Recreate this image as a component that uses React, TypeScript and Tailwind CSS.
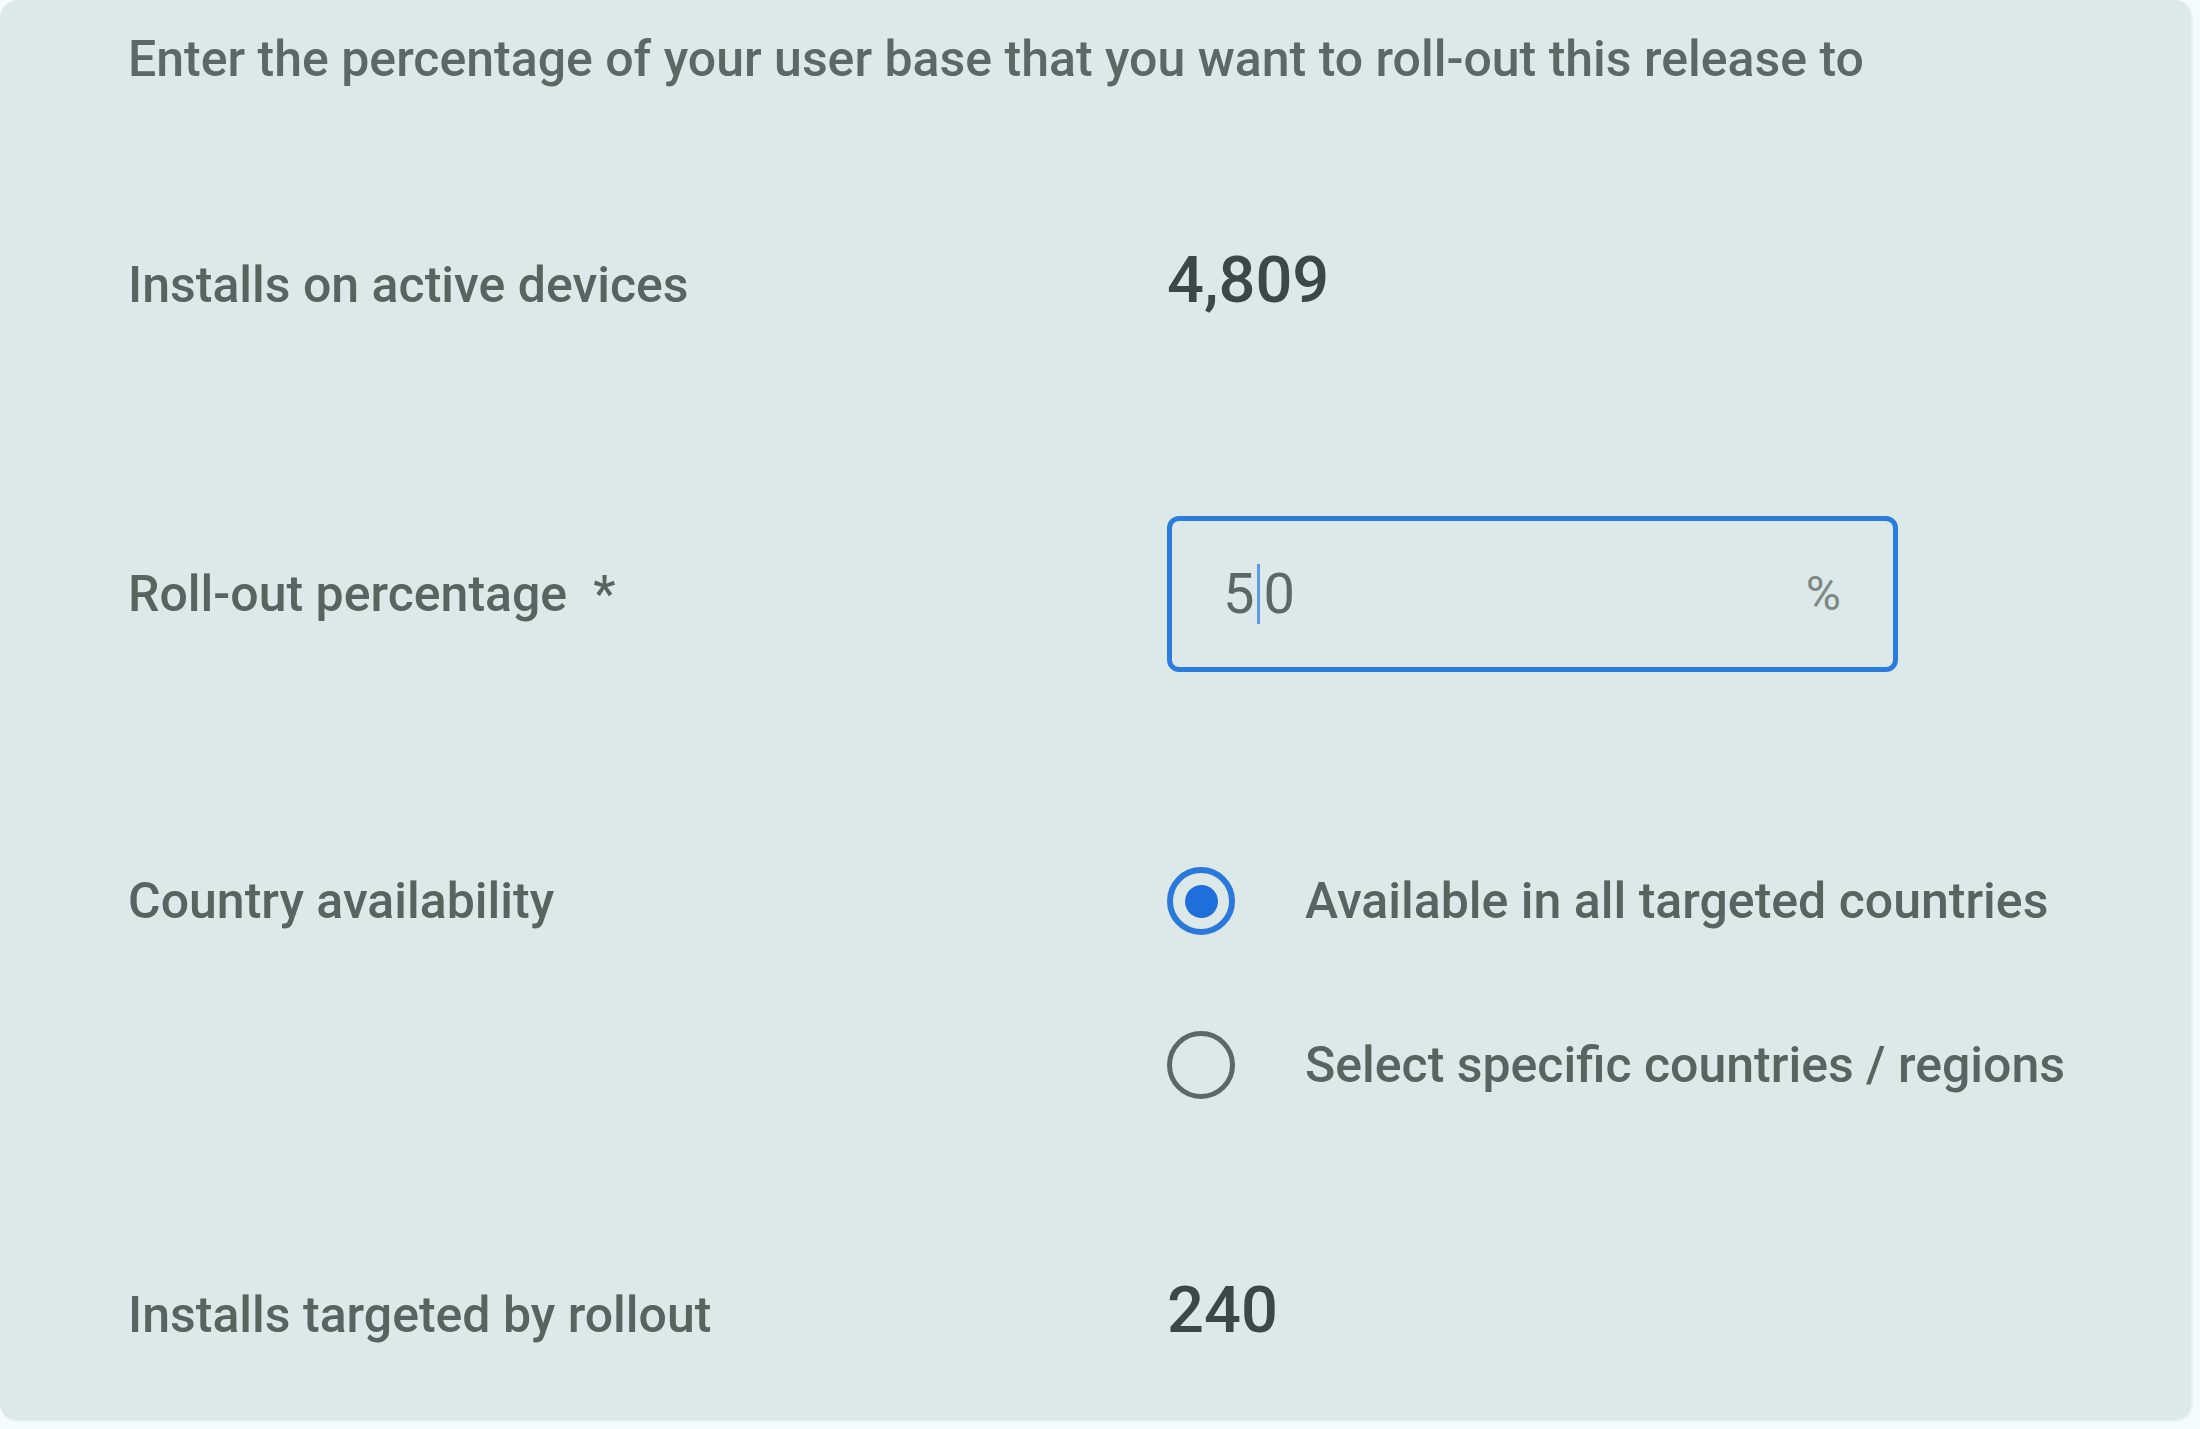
const font = { fontFamily: "Roboto, 'Noto Sans', Arial, sans-serif" };

function Radio({ checked, label }: { checked?: boolean; label: string }) {
  return (
    <div className="flex h-[100px] items-center">
      {checked ? (
        <div className="flex h-[68px] w-[68px] items-center justify-center rounded-full border-[6px] border-[#2a78dc]">
          <div className="h-[33px] w-[33px] rounded-full bg-[#1f6fdb]" />
        </div>
      ) : (
        <div className="h-[68px] w-[68px] rounded-full border-[5px] border-[#5c6868]" />
      )}
      <span className="ml-[70px] text-[50px] font-medium text-[#58645f]">{label}</span>
    </div>
  );
}

export default function App() {
  return (
    <div className="min-h-screen bg-[#f6fbfb]" style={font}>
      <div className="flex h-[1422px] w-[2193px] flex-col rounded-[18px] border-r-2 border-b-2 border-[#e8f3f3] bg-[#dde9e8] pl-[128px]">
        <div className="mt-[29px] flex h-[60px] items-center text-[50px] font-medium text-[#5c6866]">
          Enter the percentage of your user base that you want to roll-out this release to
        </div>

        <div className="mt-[143px] flex h-[100px] items-baseline">
          <span className="w-[1039px] text-[50px] font-medium text-[#58645f]">Installs on active devices</span>
          <span className="text-[65px] font-medium text-[#3c4848]">4,809</span>
        </div>

        <div className="mt-[184px] flex h-[156px] items-center">
          <span className="w-[1039px] text-[50px] font-medium text-[#58645f]">
            Roll-out percentage<span className="ml-[26px]">*</span>
          </span>
          <div className="flex h-[156px] w-[731px] items-center justify-between rounded-[12px] border-[5px] border-[#2a7ddf] pr-[52px] pl-[51px]">
            <div className="flex items-center text-[56px] text-[#5c6766]">
              <span>5</span>
              <span className="mx-[3px] inline-block h-[60px] w-[3px] bg-[#5b9ae8]" />
              <span>0</span>
            </div>
            <span className="text-[48px] text-[#7c8786]">%</span>
          </div>
        </div>

        <div className="mt-[179px] flex">
          <div className="flex h-[100px] w-[1039px] items-center text-[50px] font-medium text-[#58645f]">
            Country availability
          </div>
          <div className="flex flex-col gap-[64px]">
            <Radio checked label="Available in all targeted countries" />
            <Radio label="Select specific countries / regions" />
          </div>
        </div>

        <div className="mt-[147px] flex h-[100px] items-baseline">
          <span className="w-[1039px] text-[50px] font-medium text-[#58645f]">Installs targeted by rollout</span>
          <span className="text-[65px] font-medium text-[#3c4848]">240</span>
        </div>
      </div>
    </div>
  );
}
